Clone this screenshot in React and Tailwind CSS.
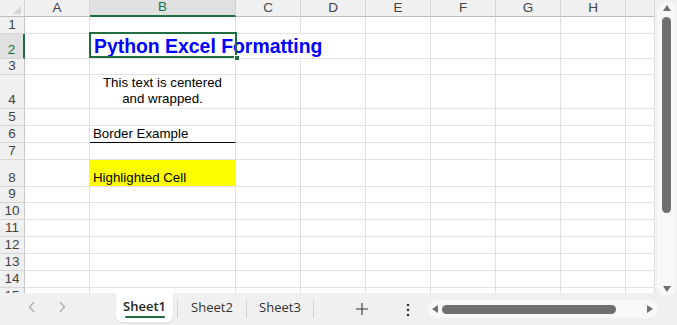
import React from "react";

const COLS = ["A", "B", "C", "D", "E", "F", "G", "H", ""];
const ROWS = [1, 2, 3, 4, 5, 6, 7, 8, 9, 10, 11, 12, 13, 14, 15];

const cellFont = { fontFamily: '"Liberation Sans", Arial, sans-serif' };
const uiFont = { fontFamily: '"Open Sans", "Noto Sans", sans-serif' };

function Cell({ r, c }) {
  const base =
    "border-r border-b border-[#e1e1e1] relative min-w-0";
  if (c === 1 && r === 2) {
    return (
      <div className={`${base} flex items-end pl-[4px] pb-[2px] z-10`}>
        <span
          className="whitespace-nowrap text-[19.4px] font-bold leading-none text-[#0000ff]"
          style={cellFont}
        >
          Python Excel Formatting
        </span>
        <div className="absolute left-[-1px] top-[-2px] w-[148px] h-[26px] border-2 border-[#1e6e42] pointer-events-none" />
        <div className="absolute left-[144px] top-[21px] w-[6px] h-[6px] bg-[#1e6e42] border border-white" />
      </div>
    );
  }
  if (c === 2 && r === 2) {
    return <div className={`${base} border-r-transparent`} />;
  }
  if (c === 1 && r === 4) {
    return (
      <div
        className={`${base} flex items-end justify-center pb-[1px] text-center text-[13.3px] leading-[16px] text-black`}
        style={cellFont}
      >
        <div>
          This text is centered
          <br />
          and wrapped.
        </div>
      </div>
    );
  }
  if (c === 1 && r === 6) {
    return (
      <div
        className="border-r border-[#e1e1e1] border-b border-b-black flex items-end pl-[3px] pb-[1px] text-[13.3px] leading-[15px] text-black"
        style={cellFont}
      >
        Border Example
      </div>
    );
  }
  if (c === 1 && r === 8) {
    return (
      <div
        className="border-r border-b border-[#e1e1e1] bg-[#ffff00] flex items-end pl-[3px] pb-[1px] text-[13.3px] leading-[15px] text-black"
        style={cellFont}
      >
        Highlighted Cell
      </div>
    );
  }
  return <div className={base} />;
}

function Tri({ dir, className }) {
  const pts = {
    up: "0,6 4,0 8,6",
    down: "0,0 8,0 4,6",
    left: "6,0 6,8 0,4",
    right: "0,0 6,4 0,8",
  }[dir];
  const vb = dir === "up" || dir === "down" ? "0 0 8 6" : "0 0 6 8";
  const size =
    dir === "up" || dir === "down"
      ? { width: 8, height: 6 }
      : { width: 6, height: 8 };
  return (
    <svg viewBox={vb} {...size} className={className}>
      <polygon points={pts} fill="#6f6f6f" />
    </svg>
  );
}

export default function App() {
  return (
    <div className="w-[677px] h-[325px] flex flex-col bg-[#f0f0f0] overflow-hidden">
      <div className="flex h-[293px]">
        <div className="w-[655px] h-[293px] overflow-hidden bg-white">
          <div className="grid grid-cols-[25px_65px_146px_65px_65px_65px_65px_65px_65px_29px] grid-rows-[17px_17px_25px_16px_34px_17px_17px_17px_27px_16px_17px_17px_17px_17px_17px_17px]">
            {/* corner */}
            <div className="bg-[#f0f0f0] border-r border-b border-r-[#d0d0d0] border-b-[#bdbdbd] relative">
              <svg
                width="8"
                height="8"
                viewBox="0 0 8 8"
                className="absolute right-[3px] bottom-[2px]"
              >
                <polygon points="8,0 8,8 0,8" fill="#d6d6d6" />
              </svg>
            </div>
            {COLS.map((l, i) => (
              <div
                key={"h" + i}
                className={
                  i === 1
                    ? "bg-[#e0e0e0] border-r border-r-[#d0d0d0] border-b-2 border-b-[#1e6e42] flex items-center justify-center text-[13.5px] text-[#1e6e42]"
                    : "bg-[#f0f0f0] border-r border-r-[#d6d6d6] border-b border-b-[#bdbdbd] flex items-center justify-center text-[13.5px] text-[#444]"
                }
                style={cellFont}
              >
                {l}
              </div>
            ))}
            {ROWS.map((r) => (
              <React.Fragment key={r}>
                <div
                  className={
                    r === 2
                      ? "bg-[#e0e0e0] border-r-2 border-r-[#1e6e42] border-b border-b-[#d6d6d6] flex items-end justify-center pb-[1px] text-[13.5px] leading-[15px] text-[#1e6e42]"
                      : "bg-[#f0f0f0] border-r border-r-[#c8c8c8] border-b border-b-[#d6d6d6] flex items-end justify-center pb-[1px] text-[13.5px] leading-[15px] text-[#444]"
                  }
                  style={cellFont}
                >
                  {r}
                </div>
                {COLS.map((_, c) => (
                  <Cell key={c} r={r} c={c} />
                ))}
              </React.Fragment>
            ))}
          </div>
        </div>
        {/* vertical scrollbar */}
        <div className="w-[22px] h-[293px] pl-[2px] pr-[1px] pt-[2px]">
          <div className="h-[294px] rounded-full bg-[#f8f8f8] flex flex-col items-center">
            <Tri dir="up" className="mt-[3px]" />
            <div className="mt-[6px] w-[9px] h-[196px] rounded-full bg-[#6f6f6f]" />
            <Tri dir="down" className="mt-[73px]" />
          </div>
        </div>
      </div>
      {/* tab bar */}
      <div className="h-[32px] flex items-start" style={uiFont}>
        <div className="w-[116px] h-full flex items-center pl-[27px] pb-[4px] gap-[20px] text-[#a8a8a8]">
          <svg width="10" height="12" viewBox="0 0 10 12">
            <path d="M7 1 L2.5 6 L7 11" fill="none" stroke="#a8a8a8" strokeWidth="1.2" />
          </svg>
          <svg width="10" height="12" viewBox="0 0 10 12">
            <path d="M3 1 L7.5 6 L3 11" fill="none" stroke="#a8a8a8" strokeWidth="1.2" />
          </svg>
        </div>
        <div className="w-[57px] h-[29px] bg-white rounded-b-[6px] shadow-[0_1px_2px_rgba(0,0,0,0.08)] flex flex-col items-center pt-[5px]">
          <span className="text-[13px] leading-[16px] font-semibold text-[#242424]">
            Sheet1
          </span>
          <div className="mt-[2px] w-[40px] h-[2px] rounded-full bg-[#1e6e42]" />
        </div>
        <div className="w-px h-[18px] bg-[#d0d0d0] ml-[4px] mt-[7px]" />
        <div className="w-[68px] h-full flex items-center justify-center pb-[2px] text-[13px] text-[#333]">
          Sheet2
        </div>
        <div className="w-px h-[18px] bg-[#d0d0d0] mt-[7px]" />
        <div className="w-[66px] h-full flex items-center justify-center pb-[2px] text-[13px] text-[#333]">
          Sheet3
        </div>
        <div className="w-px h-[18px] bg-[#d0d0d0] mt-[7px]" />
        <svg width="12" height="12" viewBox="0 0 12 12" className="ml-[42px] mt-[10px]">
          <path d="M6 0 V12 M0 6 H12" stroke="#333" strokeWidth="1.1" />
        </svg>
        <svg width="4" height="14" viewBox="0 0 4 14" className="ml-[38px] mt-[10px]">
          <circle cx="2" cy="2" r="1.3" fill="#333" />
          <circle cx="2" cy="7" r="1.3" fill="#333" />
          <circle cx="2" cy="12" r="1.3" fill="#333" />
        </svg>
        <div className="ml-[18px] mt-[7px] w-[230px] h-[18px] rounded-full bg-[#f8f8f8] flex items-center pl-[4px]">
          <Tri dir="left" />
          <div className="ml-[4px] w-[174px] h-[9px] rounded-full bg-[#6f6f6f]" />
          <Tri dir="right" className="ml-[31px]" />
        </div>
      </div>
    </div>
  );
}
